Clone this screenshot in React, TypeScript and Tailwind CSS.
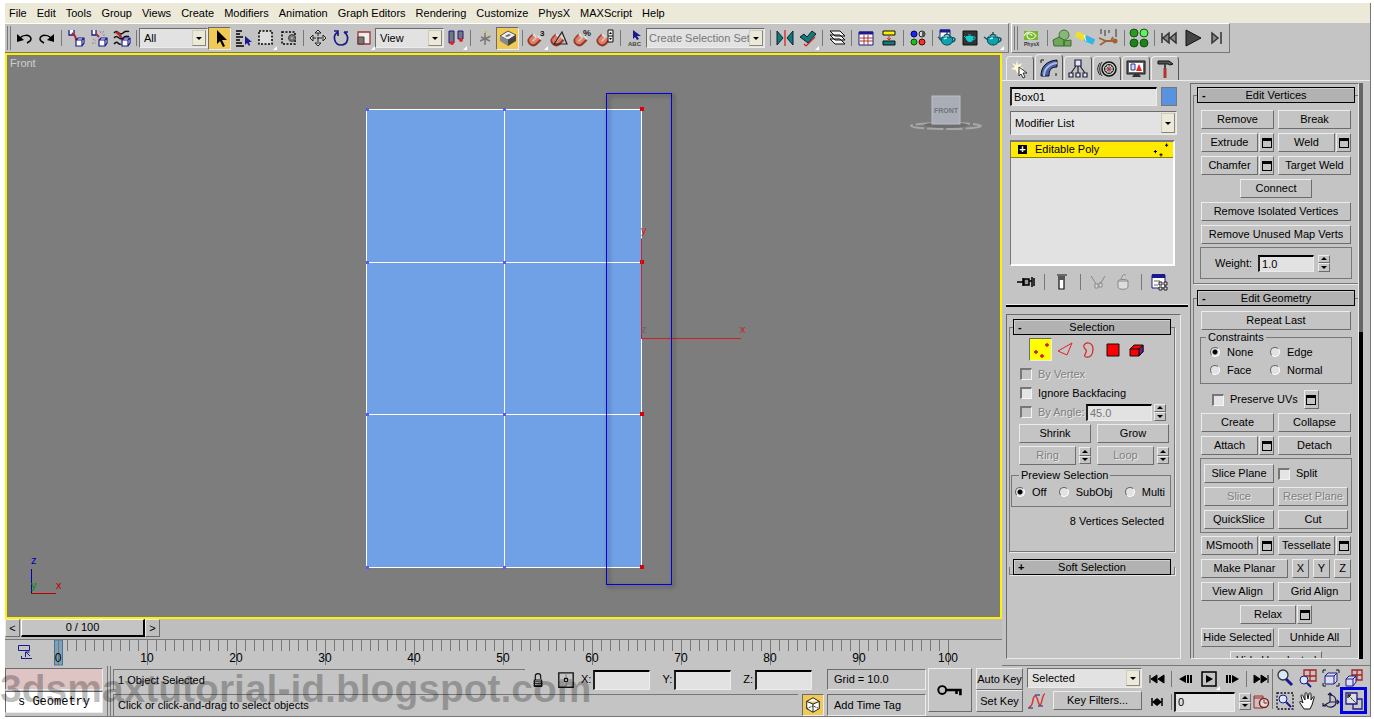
import type { ReactNode } from "react";
import clsx from "clsx";

const menus = [
  "File", "Edit", "Tools", "Group", "Views", "Create", "Modifiers", "Animation",
  "Graph Editors", "Rendering", "Customize", "PhysX", "MAXScript", "Help",
];

const raised = "border border-t-[#ececec] border-l-[#ececec] border-r-[#6c6c6c] border-b-[#6c6c6c]";
const sunken = "border border-t-[#6c6c6c] border-l-[#6c6c6c] border-r-[#ececec] border-b-[#ececec]";
const field = "border-t-2 border-l-2 border-r border-b border-t-black border-l-[#222] border-r-[#ececec] border-b-[#ececec] bg-[#e2e2e2]";

/* ---------- small building blocks ---------- */

function Icon({ children, size = 20 }: { children: ReactNode; size?: number }) {
  return (
    <svg width={size} height={size} viewBox="0 0 20 20" fill="none" className="shrink-0">
      {children}
    </svg>
  );
}

function Tool({ label, active, flyout, wide, children }: {
  label: string;
  active?: boolean;
  flyout?: boolean;
  wide?: boolean;
  children: ReactNode;
}) {
  return (
    <button
      aria-label={label}
      className={clsx(
        "relative flex h-[23px] shrink-0 items-center justify-center",
        wide ? "w-6" : "w-[23px]",
        active && "bg-[#f1c955]",
        active && sunken
      )}
    >
      <Icon>{children}</Icon>
      {flyout && (
        <span className="absolute right-0 bottom-0 border-4 border-t-0 border-r-0 border-transparent border-b-white" />
      )}
    </button>
  );
}

function Sep() {
  return (
    <div className="flex w-1.5 shrink-0 justify-center">
      <div className="h-4 w-px bg-[#777]" />
    </div>
  );
}

function Grip() {
  return (
    <div className="flex w-[7px] shrink-0 gap-0.5 pl-0.5">
      <div className="h-6 w-px bg-[#777]" />
      <div className="h-6 w-px bg-[#777]" />
    </div>
  );
}

function Combo({ label, value, className, muted }: {
  label: string;
  value: string;
  className: string;
  muted?: boolean;
}) {
  return (
    <div className={clsx("relative shrink-0 bg-[#e2e2e2]", sunken, className)}>
      <select
        aria-label={label}
        className={clsx(
          "h-full w-full appearance-none overflow-hidden outline-none",
          muted ? "pr-3.5 pl-0.5 text-[#777]" : "pr-4 pl-1"
        )}
      >
        <option>{value}</option>
      </select>
      <span className="pointer-events-none absolute inset-y-px right-px flex w-3.5 items-center justify-center border border-[#d0ccba] border-r-[#8a8778] border-b-[#8a8778] bg-[#ece9d8]">
        <span className="border-x-[3px] border-t-[3px] border-x-transparent border-t-black" />
      </span>
    </div>
  );
}

function Btn({ children, disabled, className }: {
  children: ReactNode;
  disabled?: boolean;
  className?: string;
}) {
  return (
    <button
      disabled={disabled}
      className={clsx(
        "flex h-[19px] min-w-0 items-center justify-center whitespace-nowrap",
        raised,
        disabled && "text-[#808080] [text-shadow:1px_1px_#ececec]",
        className
      )}
    >
      {children}
    </button>
  );
}

function SettingsBtn() {
  return (
    <button aria-label="Settings" className={clsx("flex h-[19px] w-[15px] shrink-0 items-center justify-center", raised)}>
      <span className="h-2.5 w-2.5 border border-t-[3px] border-black" />
    </button>
  );
}

function WithSettings({ children }: { children: ReactNode }) {
  return (
    <div className="flex min-w-0 gap-px">
      <Btn className="flex-1">{children}</Btn>
      <SettingsBtn />
    </div>
  );
}

function Spinner() {
  return (
    <span className="flex h-[17px] w-3 shrink-0 flex-col">
      <button aria-label="Increase" className={clsx("flex flex-1 items-center justify-center", raised)}>
        <span className="border-x-[3px] border-b-[3px] border-x-transparent border-b-black" />
      </button>
      <button aria-label="Decrease" className={clsx("flex flex-1 items-center justify-center", raised)}>
        <span className="border-x-[3px] border-t-[3px] border-x-transparent border-t-black" />
      </button>
    </span>
  );
}

function Check({ label, disabled }: { label: string; disabled?: boolean }) {
  return (
    <label className={clsx("flex h-4 items-center gap-1.5 whitespace-nowrap", disabled && "text-[#808080] [text-shadow:1px_1px_#ececec]")}>
      <input
        type="checkbox"
        disabled={disabled}
        className={clsx(
          "h-3 w-3 appearance-none border-t-2 border-l-2 border-r border-b border-t-[#777] border-l-[#777] border-r-[#f4f4f4] border-b-[#f4f4f4]",
          disabled ? "bg-[#c4c4c4]" : "bg-[#e4e4e4]"
        )}
      />
      {label}
    </label>
  );
}

function Radio({ label, name, checked }: { label: string; name: string; checked?: boolean }) {
  return (
    <label className="flex h-4 items-center gap-[7px] whitespace-nowrap">
      <input
        type="radio"
        name={name}
        defaultChecked={checked}
        className="h-2.5 w-2.5 appearance-none rounded-full border border-t-[#666] border-l-[#666] border-r-white border-b-white bg-[#e2e2e2] checked:bg-[radial-gradient(circle,#000_2px,#e2e2e2_3px)]"
      />
      {label}
    </label>
  );
}

function Rollout({ title, children }: { title: string; children?: ReactNode }) {
  return (
    <section className="w-[166px]">
      <button className="relative mx-1 flex h-4 w-[158px] items-center justify-center border border-black bg-[#b2b2b2] shadow-[inset_1px_1px_#cfcfcf]">
        <span className="absolute left-1 font-bold">{children ? "-" : "+"}</span>
        {title}
      </button>
      <div className={clsx("-mt-2 border border-[#777] shadow-[1px_1px_#e8e8e8]", !children && "h-2 border-t-0")}>{children}</div>
    </section>
  );
}

/* ---------- toolbar ---------- */

const magnet = (
  <g>
    <path d="M3 11c-2 4 3 7 6 4l4-4M3 11l4-4" stroke="#8d3c2c" strokeWidth="4" />
    <path d="M4 11c-2 3 2 5 4 3l4-4M4 11l3-3" stroke="#ef7a62" strokeWidth="2.5" />
    <path d="M6 6l3 3M11 8l3 3" stroke="#ddd" strokeWidth="2" />
  </g>
);

const teapot = (
  <g>
    <path d="M5 9h10c2 5-1 8-5 8s-7-3-5-8z" fill="#0aa5ac" stroke="#063c50" />
    <path d="M5 12L1 9M15 10c4-1 4 3 0 4M7 8c1-2 5-2 6 0M10 6V4" stroke="#075a6e" strokeWidth="1.5" />
    <path d="M7 11c1-1 2-1 3-1" stroke="#9ff" strokeWidth="1.5" />
  </g>
);

const cube = (
  <path d="M10 12l2-2h6v5l-2 3h-6zM10 12h6v6M16 12l2-2" fill="#fff" stroke="#1a1a8c" strokeWidth="1.2" />
);

function MainToolbar() {
  return (
    <div className="flex h-[30px] items-center border-t border-t-white border-r border-r-[#777] border-b border-b-[#777] pr-1">
      <Grip />
      <Tool label="Undo"><path d="M5 12c2-6 12-6 12-1 0 2-2 3-4 4" stroke="#000" strokeWidth="1.5" /><path d="M3 6v8l7-2z" fill="#000" /></Tool>
      <Tool label="Redo"><path d="M15 12C13 6 3 6 3 11c0 2 2 3 4 4" stroke="#000" strokeWidth="1.5" /><path d="M17 6v8l-7-2z" fill="#000" /></Tool>
      <Sep />
      <Tool label="Select and Link"><path d="M3 2v5h5V2" stroke="#1a1a8c" strokeWidth="1.3" fill="#fff" /><path d="M6 5l3 3 1 3 3 2" stroke="#b02828" strokeWidth="2" />{cube}</Tool>
      <Tool label="Unlink Selection"><path d="M3 2v5h4V2" stroke="#1a1a8c" strokeWidth="1.3" fill="#fff" /><path d="M7 6l3 3" stroke="#b02828" strokeWidth="2" /><path d="M11 3l1 3M15 3l-2 3M16 7h-3M4 11l3 2M3 15h4" stroke="#888" strokeDasharray="2 1" />{cube}</Tool>
      <Tool label="Bind to Space Warp"><path d="M2 5c4-5 5 4 9 0s4 0 6-2M2 10c4-5 5 4 9 0s4 0 6-2M2 16c4-5 4 2 7 0" stroke="#111" strokeWidth="1.5" /><path d="M4 4l4 3 1 3" stroke="#b02828" strokeWidth="2.5" />{cube}</Tool>
      <Sep />
      <Combo label="Selection Filter" value="All" className="h-5 w-[69px]" />
      <Tool label="Select Object" active><path d="M7 2v14l3-3 3 6 2-1-3-6h5z" fill="#000" /></Tool>
      <Tool label="Select by Name"><path d="M3 3h6M3 6h4M3 9h7M3 12h4M3 15h6M3 18h8" stroke="#000" strokeWidth="1.3" /><path d="M12 8v9l2-2 2 3 1-1-1-3h3z" fill="#1a1a8c" /></Tool>
      <Tool label="Rectangular Selection Region" flyout><path d="M3 3h13v13H3z" fill="#ddd" stroke="#000" strokeWidth="1.5" strokeDasharray="2 1.5" /></Tool>
      <Tool label="Window Crossing"><path d="M3 4h13v12H3z" stroke="#000" strokeWidth="1.5" strokeDasharray="2 1.5" /><circle cx="13" cy="10" r="3.5" fill="#777" stroke="#444" /><circle cx="13" cy="10" r="1" fill="#bbb" /></Tool>
      <Sep />
      <Tool label="Select and Move"><path d="M10 3v14M3 10h14" stroke="#222" strokeDasharray="5 1" /><path d="M10 2l3 3H7zM10 18l3-3H7zM2 10l3-3v6zM18 10l-3-3v6z" fill="#ddd" stroke="#222" /></Tool>
      <Tool label="Select and Rotate"><path d="M13 4c6 4 4 13-3 13S1 7 7 4M7 8V3H3M13 4h4" stroke="#1a1a8c" strokeWidth="1.7" /></Tool>
      <Tool label="Select and Uniform Scale" flyout><path d="M4 4h12v12H4z" fill="#eee" stroke="#a03535" strokeWidth="1.3" /><path d="M4 9h6v7H4z" fill="#777" stroke="#603030" /></Tool>
      <Combo label="Reference Coordinate System" value="View" className="h-5 w-[69px]" />
      <Tool label="Use Pivot Point Center" flyout><path d="M3 3h5v12H3zM12 3h5v8h-5z" fill="#777" stroke="#1a1a8c" /><circle cx="6" cy="15" r="2" fill="#e22" /><circle cx="15" cy="12" r="2" fill="#e22" /></Tool>
      <Sep />
      <Tool label="Select and Manipulate"><path d="M10 17V4M5 13l11-5M6 9l9 4" stroke="#777" strokeWidth="1.5" /><path d="M9 4h3M15 8h2" stroke="#d4c332" strokeWidth="2" /></Tool>
      <Tool label="Keyboard Shortcut Override" active><path d="M2 8l8-5 8 4-8 5z" fill="#eee" stroke="#555" /><path d="M2 8l8 4v6l-8-5z" fill="#888" /><path d="M10 12l8-5v6l-8 5z" fill="#444" /><path d="M7 8l4-2 2 1-4 2z" fill="#666" /></Tool>
      <Sep />
      <Tool label="Snaps Toggle" flyout>{magnet}<text x="13" y="8" fontSize="8" fontWeight="bold" fill="#111">3</text></Tool>
      <Tool label="Angle Snap Toggle">{magnet}<path d="M4 16L12 4l5 12z" stroke="#222" strokeWidth="1.2" /></Tool>
      <Tool label="Percent Snap Toggle">{magnet}<text x="10" y="8" fontSize="9" fontWeight="bold" fill="#222">%</text></Tool>
      <Tool label="Spinner Snap Toggle">{magnet}<path d="M12 2h5v12h-5zM12 8h5" stroke="#111" fill="#eee" /><path d="M13 6l1.500-2L16 6zM13 10l1.500 2L16 10z" fill="#000" /></Tool>
      <Sep />
      <Tool label="Edit Named Selection Sets"><path d="M8 2v9l2-2 2 3 2-1-2-3h4z" fill="#1a1a8c" /><text x="3" y="18" fontSize="6" fontWeight="bold" fill="#444">ABC</text></Tool>
      <Combo label="Named Selection Sets" value="Create Selection Set" className="h-5 w-[119px]" muted />
      <div className="w-0.5" />
      <Sep />
      <Tool label="Mirror"><path d="M2 3l6 7-6 7zM18 3l-6 7 6 7z" fill="#0e7b78" stroke="#123" /><path d="M10 2v16" stroke="#d22" strokeWidth="1.3" /></Tool>
      <Tool label="Align" flyout><path d="M2 9l4-3 3 3 5-6 4 3-8 9z" fill="#0e7b78" stroke="#123" /><path d="M8 18l9-9M6 16l2 2" stroke="#d22" strokeWidth="1.3" /></Tool>
      <Sep />
      <Tool label="Layer Manager"><g stroke="#111" fill="#f4f4f4"><path d="M3 11h10l5 5H8zM3 7h10l5 5H8zM3 3h10l5 5H8z" /></g></Tool>
      <Sep />
      <Tool label="Curve Editor"><path d="M3 4h14v13H3z" fill="#fff" stroke="#1a1a8c" /><path d="M3 5h14" stroke="#1a1a8c" strokeWidth="3" /><path d="M8 7v10M12 7v10M4 10h13M4 13h13" stroke="#a33" /></Tool>
      <Tool label="Schematic View"><path d="M4 3h12v4H4z" fill="#fff200" stroke="#111" /><path d="M4 13h12v4H4z" fill="#0e7b78" stroke="#111" /><path d="M10 8v4M8 10l2 2 2-2" stroke="#d22" /></Tool>
      <Sep />
      <Tool label="Material Editor"><circle cx="6" cy="6" r="3" fill="#22e" stroke="#006" /><circle cx="14" cy="6" r="3" fill="#ddd" stroke="#222" /><path d="M14 3a3 3 0 0 1 0 6z" fill="#555" /><circle cx="6" cy="14" r="3" fill="#2b2" stroke="#050" /><circle cx="14" cy="14" r="3" fill="#e33" stroke="#500" /></Tool>
      <Sep />
      <Tool label="Render Setup"><path d="M3 2h10v10H3z" fill="#fff" stroke="#1a1a8c" /><path d="M3 3h10" stroke="#1a1a8c" strokeWidth="3" />{teapot}</Tool>
      <Tool label="Rendered Frame Window"><path d="M3 3h14v14H3z" fill="#333" stroke="#111" /><path d="M6 8h7c1 4-1 6-3 6s-5-2-4-6z" fill="#1cc" /><path d="M13 9c3-1 3 2 0 3M6 10L4 8M8 7h3" stroke="#1cc" /></Tool>
      <Tool label="Quick Render" flyout>{teapot}</Tool>
    </div>
  );
}

function PhysxToolbar() {
  return (
    <div className="ml-0.5 flex h-[30px] w-[219px] items-center border border-t-white border-l-white border-r-[#777] border-b-[#777]">
      <Grip />
      <Tool label="PhysX"><path d="M3 3h14v9H3z" fill="#76b82a" /><path d="M3 8c3-6 10-4 12 0-3 4-8 4-9 0s5-2 5 0" stroke="#e4f2cf" strokeWidth="1.2" /><text x="3" y="18" fontSize="5" fontWeight="bold" fill="#333">PhysX</text></Tool>
      <div className="w-0.5" />
      <Sep />
      <Tool label="Rigid Body"><circle cx="12" cy="7" r="5" fill="#86b978" stroke="#47713b" /><path d="M1 12l6-3 5 3v6H2zM12 13l7-1v6h-7z" fill="#6da858" stroke="#3d6d2f" /></Tool>
      <Tool label="Constraint"><path d="M1 6l9 4" stroke="#efdf25" strokeWidth="6" /><path d="M10 10l9 4" stroke="#30b7e8" strokeWidth="6" /><path d="M9 7l2 6" stroke="#fff" /></Tool>
      <Tool label="Ragdoll"><path d="M3 1v5M7 2v6M11 2v3M18 1v8" stroke="#333" /><path d="M1 10l7 3h8M8 13l-6 4M15 9l-2 4" stroke="#a26238" strokeWidth="1.8" /><circle cx="17" cy="13" r="2.500" fill="#a26238" /></Tool>
      <div className="w-0.5" />
      <Sep />
      <Tool label="Bake" wide><g stroke="#125512"><circle cx="5" cy="5" r="4" fill="#2a9a24" /><circle cx="15" cy="5" r="4" fill="#63ef62" /><circle cx="5" cy="15" r="4" fill="#1e831c" /><circle cx="15" cy="15" r="4" fill="#1e831c" /></g></Tool>
      <Sep />
      <Tool label="Reset Simulation" wide><path d="M3 5v10M10 5l-6 5 6 5zM17 5l-6 5 6 5z" fill="#888" stroke="#333" strokeWidth="1.500" /></Tool>
      <Tool label="Play Simulation" wide><path d="M3 2l15 8-15 8z" fill="#444" stroke="#111" /></Tool>
      <Tool label="Step Simulation"><path d="M5 5l6 5-6 5zM14 4v12" fill="#888" stroke="#333" strokeWidth="1.500" /></Tool>
    </div>
  );
}

/* ---------- viewport ---------- */

const rows = [109, 262, 414, 567];

function Viewport() {
  return (
    <div className="min-h-0 flex-1 border-2 border-[#fff200] bg-[#7d7d7d]">
      <svg viewBox="7 55 993 562" className="h-full w-full text-[11px]">
        <defs>
          <filter id="soft" x="-30%" y="-10%" width="160%" height="120%">
            <feDropShadow dx="2" dy="2" stdDeviation="2" floodColor="#000" floodOpacity="0.6" />
          </filter>
        </defs>
        <text x="10" y="67" fill="#cfcfcf">Front</text>

        <rect x="366" y="109" width="276" height="459" fill="#70a0e6" />
        <g stroke="#fff" shapeRendering="crispEdges">
          <path d="M366.500 109v459M504.500 109v459M641.500 109v129M641.500 338v230" />
          {rows.map((y) => (
            <path key={y} d={`M366 ${y + 0.5}H642`} />
          ))}
        </g>
        {rows.map((y) => (
          <g key={y} shapeRendering="crispEdges">
            <rect x="366" y={y - 1} width="3" height="3" fill="#5a5af0" />
            <rect x="503" y={y - 1} width="3" height="3" fill="#5a5af0" />
            <rect x="640" y={y - 2} width="4" height="4" fill="#d00" />
          </g>
        ))}

        {/* transform gizmo */}
        <path d="M641.500 239V338.500H741" stroke="#d02020" fill="none" shapeRendering="crispEdges" />
        <text x="641" y="234" fill="#d02020">y</text>
        <text x="740" y="333" fill="#d02020">x</text>
        <text x="641" y="333" fill="#666">z</text>

        <rect x="606.500" y="93.500" width="65" height="491" fill="none" stroke="#0000e0" filter="url(#soft)" />

        {/* view cube */}
        <ellipse cx="946" cy="126" rx="35" ry="3" fill="none" stroke="#a4a7ac" strokeWidth="2" strokeDasharray="16 3" />
        <ellipse cx="946" cy="125" rx="22" ry="3" fill="#6e6e6e" />
        <rect x="932" y="96" width="28" height="28" fill="#a9adb5" stroke="#bbbfc6" />
        <text x="946" y="113" textAnchor="middle" fontSize="7" fontWeight="bold" fill="#71757d">FRONT</text>

        {/* world axis */}
        <path d="M31.500 569v25" stroke="#0000b4" />
        <path d="M31 593.500h25" stroke="#c00000" />
        <text x="31" y="564" fill="#0000b4">z</text>
        <text x="31" y="589" fill="#009000">y</text>
        <text x="56" y="589" fill="#c00000">x</text>
      </svg>
    </div>
  );
}

function TimeSlider() {
  return (
    <div className="flex h-5 items-start bg-[#bebebe]">
      <button className={clsx("flex h-[18px] w-[15px] items-center justify-center", raised)}>&lt;</button>
      <button className="ml-px flex h-[18px] w-[124px] items-center justify-center border-t border-r-2 border-b-2 border-l border-t-white border-r-black border-b-black border-l-white bg-[#c4c4c4]">
        0 / 100
      </button>
      <button className={clsx("flex h-[18px] w-[15px] items-center justify-center", raised)}>&gt;</button>
    </div>
  );
}

const frames = Array.from({ length: 101 }, (_, i) => i);

function TrackBar() {
  return (
    <div className="h-[27px] border-t border-[#777]">
      <svg viewBox="5 640 997 26" className="h-full w-full text-[12px]">
        <path d="M18.500 645.500h11v5h-11zM21 658.500h11M21.500 656v2M25.500 657v-5h4M26 652l4 4" stroke="#1a1a8c" fill="none" />
        <rect x="54.500" y="640" width="8" height="25" fill="#7ba2bd" stroke="#4d7488" />
        {frames.map((f) => {
          const x = Math.round(58 + f * 8.9) + 0.5;
          return <path key={f} d={`M${x} 640v${f % 10 ? 11 : 25}`} stroke="#777" />;
        })}
        {frames.filter((f) => f % 10 === 0).map((f) => (
          <text key={f} x={58 + f * 8.9} y="662" textAnchor="middle">{f}</text>
        ))}
      </svg>
    </div>
  );
}

/* ---------- command panel ---------- */

const tabs = [
  { name: "Create", art: <><path d="M7 1l1 5 4-2-2 4 4 1-5 2-2 4-1-4-5-1 4-2-3-4 4 2z" fill="#fffbd8" /><path d="M9 8v9l2-2 2 4 2-1-2-4h4z" fill="#fff" stroke="#333" /></> },
  { name: "Modify", art: <><path d="M2 18C2 9 7 3 18 2v7c-6 0-8 3-8 9z" fill="#4b62a8" stroke="#111" /><path d="M5 18C5 11 10 6 18 5" stroke="#a9bbe8" strokeWidth="2" /><path d="M2 2h3M2 2v3M17 18v-3" stroke="#111" /></> },
  { name: "Hierarchy", art: <path d="M7 1h6v6H7zM1 14h4v4H1zM8 14h4v4H8zM15 14h4v4h-4zM10 7v7M8 7l-5 7M12 7l5 7" fill="#dfe4ff" stroke="#223" strokeWidth="1.200" /> },
  { name: "Motion", art: <><circle cx="12" cy="10" r="7" fill="#ccc" stroke="#111" strokeWidth="1.500" /><circle cx="12" cy="10" r="4.500" stroke="#111" /><path d="M9 7l6 6M15 7l-6 6M12 6v8M8 10h8" stroke="#444" strokeWidth="0.700" /><circle cx="12" cy="10" r="1.500" fill="#d22" /><path d="M3 4c-3 4-3 8 0 12M5 3c-3 4-3 10 0 14" stroke="#222" /></> },
  { name: "Display", art: <><path d="M1 2h18v13H1z" fill="#666" stroke="#111" /><path d="M3 4h14v9H3z" fill="#fff" /><path d="M5 5h4v6H5z" stroke="#2038a0" fill="#dde" /><path d="M10 12l3-7 3 7z" fill="#e22" /><path d="M8 15h5l2 3H6z" fill="#333" /></> },
  { name: "Utilities", art: <><path d="M3 2h11l4 3-3 1-2-1H9L3 5z" fill="#555" stroke="#111" /><path d="M10 5v6" stroke="#444" strokeWidth="2" /><path d="M10 9v10" stroke="#b0352b" strokeWidth="3" /></> },
];

function CommandTabs() {
  return (
    <div role="tablist" className="flex h-7 items-end gap-px border-b border-[#ececec] pl-1">
      {tabs.map(({ name, art }) => (
        <button
          key={name}
          role="tab"
          aria-label={name}
          aria-selected={name === "Modify"}
          className={clsx(
            "flex w-7 items-center justify-center rounded-t-sm border border-b-0 border-t-[#ececec] border-l-[#ececec] border-r-[#555]",
            name === "Modify" ? "h-[26px]" : "h-6"
          )}
        >
          <Icon>{art}</Icon>
        </button>
      ))}
    </div>
  );
}

function ModifierStack() {
  return (
    <div className="pl-1">
      <div className="flex h-[19px] gap-1">
        <input aria-label="Object name" defaultValue="Box01" className={clsx("w-[147px] px-0.5 outline-none", field)} />
        <button aria-label="Object color" className="w-4 border border-[#777] bg-[#5a92e2]" />
      </div>
      <Combo label="Modifier List" value="Modifier List" className="mt-[5px] h-6 w-[167px]" />
      <div className="mt-[5px] h-[126px] w-[165px] border-t-2 border-r-2 border-b-2 border-l border-[#777] border-r-white border-b-white bg-[#e2e2e2]">
        <div className="flex h-4 items-center border-b border-[#8a8400] bg-[#ffea00] pr-1 pl-[7px]">
          <span className="flex h-[9px] w-[9px] items-center justify-center bg-black leading-none font-bold text-white">+</span>
          <span className="flex-1 pl-2">Editable Poly</span>
          <Icon size={16}><path d="M1 12h4M3 10v4M8 16h4M10 14v4M15 4h4M17 2v4" stroke="#000" strokeWidth="1.300" /></Icon>
        </div>
      </div>
      <div className="flex h-8 items-center gap-[5px] pl-1.5">
        <Icon><path d="M1 10h6M7 6v8M8 7h5v6H8zM13 9h3M16 5v10M18 6v8" stroke="#000" strokeWidth="1.500" fill="#999" /></Icon>
        <Sep />
        <Icon><path d="M5 3h10M7 4v13h5V4" stroke="#111" fill="#fff" strokeWidth="1.200" /><path d="M7 4h6v4H7z" fill="#555" /></Icon>
        <Sep />
        <Icon><path d="M3 4l5 8M17 4l-5 8M7 12h3v4H7zM11 11h3v4h-3z" stroke="#888" fill="#ddd" /></Icon>
        <Icon><path d="M5 9c0-2 10-2 10 0v6c0 3-10 3-10 0zM5 9h10M8 7l2-4h3" stroke="#888" fill="#ddd" /></Icon>
        <Sep />
        <Icon><path d="M3 3h13v13H3z" fill="#fff" stroke="#1a1a8c" /><path d="M3 4h13" stroke="#1a1a8c" strokeWidth="4" /><path d="M5 9h6M5 13h4" stroke="#666" /><path d="M10 10h3v3h-3zM15 10h3v3h-3zM10 15h3v3h-3zM15 15h3v3h-3z" fill="#ddd" stroke="#222" /></Icon>
      </div>
    </div>
  );
}

function SelectionRollout() {
  return (
    <Rollout title="Selection">
      <div className="pt-2.5 pr-1 pb-[22px] pl-[9px]">
        <div className="flex h-[23px] items-center gap-[3px] pl-2.5">
          <button aria-label="Vertex" className={clsx("flex h-[23px] w-[23px] items-center justify-center bg-[#ffff00]", sunken)}>
            <Icon><path d="M3 12h4M5 10v4M9 16h4M11 14v4M14 5h4M16 3v4" stroke="#d00" strokeWidth="1.300" /></Icon>
          </button>
          <button aria-label="Edge"><Icon><path d="M3 11L17 3l-5 12z" stroke="#d22" /></Icon></button>
          <button aria-label="Border"><Icon><path d="M6 5c3-4 9-2 9 4s-3 9-7 8 2-5 0-7-3-3-2-5z" stroke="#d22" strokeWidth="1.200" /></Icon></button>
          <button aria-label="Polygon" className="ml-0.5"><Icon><path d="M4 4h12v12H4z" fill="#f00" stroke="#111" /></Icon></button>
          <button aria-label="Element"><Icon><path d="M4 9l4-4h9v7l-4 4H4z" fill="#f00" stroke="#111" /><path d="M13 9l4-4v7l-4 4z" fill="#7b1490" stroke="#111" /><path d="M4 9h9v7" stroke="#111" /></Icon></button>
        </div>
        <div className="mt-[5px] flex flex-col gap-[3px] pl-px">
          <Check label="By Vertex" disabled />
          <Check label="Ignore Backfacing" />
          <div className="flex h-4 items-center justify-between pr-1">
            <Check label="By Angle:" disabled />
            <div className="flex gap-0.5">
              <input aria-label="Angle" disabled defaultValue="45.0" className={clsx("h-[17px] w-[66px] px-0.5 text-[#777]", field)} />
              <Spinner />
            </div>
          </div>
        </div>
        <div className="mt-1 grid grid-cols-[72px_72px] gap-x-1.5 gap-y-[3px]">
          <Btn>Shrink</Btn>
          <Btn>Grow</Btn>
          <div className="flex items-center gap-[3px]"><Btn disabled className="flex-1">Ring</Btn><Spinner /></div>
          <div className="flex items-center gap-[3px]"><Btn disabled className="flex-1">Loop</Btn><Spinner /></div>
        </div>
        <fieldset className="mt-[3px] -ml-2 h-[39px] w-[160px] border border-[#777] px-[3px]">
          <legend className="ml-1 px-0.5 leading-[14px]">Preview Selection</legend>
          <div className="flex justify-between pt-0.5 pr-0.5">
            <Radio name="preview" label="Off" checked />
            <Radio name="preview" label="SubObj" />
            <Radio name="preview" label="Multi" />
          </div>
        </fieldset>
        <p className="mt-1.5 pr-1.5 text-right leading-4">8 Vertices Selected</p>
      </div>
    </Rollout>
  );
}

function EditVertices() {
  return (
    <Rollout title="Edit Vertices">
      <div className="px-[7px] pt-3.5 pb-1">
        <div className="grid grid-cols-2 gap-1">
          <Btn>Remove</Btn>
          <Btn>Break</Btn>
          <WithSettings>Extrude</WithSettings>
          <WithSettings>Weld</WithSettings>
          <WithSettings>Chamfer</WithSettings>
          <Btn>Target Weld</Btn>
          <Btn className="col-span-2 w-[72px] justify-self-center">Connect</Btn>
          <Btn className="col-span-2">Remove Isolated Vertices</Btn>
          <Btn className="col-span-2">Remove Unused Map Verts</Btn>
        </div>
        <div className="-mx-px mt-[3px] flex h-8 items-center border border-[#777] pl-3.5">
          <label htmlFor="weight" className="pr-1.5">Weight:</label>
          <input id="weight" defaultValue="1.0" className={clsx("mr-1 h-[17px] w-14 px-0.5 outline-none", field)} />
          <Spinner />
        </div>
      </div>
    </Rollout>
  );
}

function EditGeometry() {
  return (
    <Rollout title="Edit Geometry">
      <div className="px-[7px] pt-3 pb-1">
        <Btn className="w-full">Repeat Last</Btn>
        <fieldset className="-mx-px h-[54px] border border-[#777] px-[9px]">
          <legend className="-ml-1 px-0.5 leading-[14px]">Constraints</legend>
          <div className="grid grid-cols-[60px_60px] gap-y-0.5">
            <Radio name="constraint" label="None" checked />
            <Radio name="constraint" label="Edge" />
            <Radio name="constraint" label="Face" />
            <Radio name="constraint" label="Normal" />
          </div>
        </fieldset>
        <div className="mt-1.5 flex items-center gap-1.5 pl-[11px]">
          <Check label="Preserve UVs" />
          <SettingsBtn />
        </div>
        <div className="mt-1 grid grid-cols-2 gap-1">
          <Btn>Create</Btn>
          <Btn>Collapse</Btn>
          <WithSettings>Attach</WithSettings>
          <Btn>Detach</Btn>
        </div>
        <div className="-mx-px mt-[3px] grid grid-cols-2 items-center gap-1 border border-[#777] px-[3px] pt-[5px] pb-[3px]">
          <Btn>Slice Plane</Btn>
          <Check label="Split" />
          <Btn disabled>Slice</Btn>
          <Btn disabled>Reset Plane</Btn>
          <Btn>QuickSlice</Btn>
          <Btn>Cut</Btn>
        </div>
        <div className="mt-[3px] grid grid-cols-2 gap-1">
          <WithSettings>MSmooth</WithSettings>
          <WithSettings>Tessellate</WithSettings>
          <div className="col-span-2 flex gap-1">
            <Btn className="flex-1">Make Planar</Btn>
            <Btn className="w-[17px]">X</Btn>
            <Btn className="w-[17px]">Y</Btn>
            <Btn className="w-[17px]">Z</Btn>
          </div>
          <Btn>View Align</Btn>
          <Btn>Grid Align</Btn>
          <div className="col-span-2 w-[72px] justify-self-center"><WithSettings>Relax</WithSettings></div>
          <Btn>Hide Selected</Btn>
          <Btn>Unhide All</Btn>
          <Btn className="col-span-2 w-[92px] justify-self-center">Hide Unselected</Btn>
        </div>
      </div>
    </Rollout>
  );
}

function CommandPanel() {
  return (
    <aside className="flex min-h-0 w-[368px] shrink-0 flex-col">
      <CommandTabs />
      <div className="flex min-h-0 flex-1 gap-0.5 border-b border-[#777] pb-1.5 pl-1">
        <div className="flex w-[182px] flex-col pt-1.5">
          <ModifierStack />
          <div className="mt-1.5 h-[3px] border-b-2 border-t border-t-[#ececec] border-b-black" />
          <div className={clsx("mt-[7px] flex min-h-0 w-[175px] flex-1 flex-col gap-[7px] overflow-hidden pt-1 pl-0.5", sunken)}>
            <SelectionRollout />
            <Rollout title="Soft Selection" />
          </div>
        </div>
        <div className="flex min-h-0 pt-0.5">
          <div className={clsx("flex w-[169px] flex-col gap-1.5 overflow-hidden pt-[3px] pl-0.5", sunken)}>
            <EditVertices />
            <EditGeometry />
          </div>
          <div className="flex w-1 flex-col bg-black">
            <div className="h-[249px] bg-[#666]" />
          </div>
        </div>
      </div>
    </aside>
  );
}

/* ---------- status bar ---------- */

function Coord({ axis }: { axis: string }) {
  return (
    <label className="flex items-center gap-0.5">
      {axis}:
      <input className={clsx("h-5 w-[57px] px-0.5 outline-none", field)} />
    </label>
  );
}

function NavButton({ label, highlighted, children }: { label: string; highlighted?: boolean; children: ReactNode }) {
  return (
    <button
      aria-label={label}
      className={clsx("flex h-[23px] w-[23px] items-center justify-center", highlighted && "outline-3 -outline-offset-1 outline-[#0000e6]")}
    >
      <Icon>{children}</Icon>
    </button>
  );
}

const lens = <path d="M11 11l6 6" stroke="#1a1a8c" strokeWidth="3" />;

function StatusBar() {
  return (
    <footer className="flex h-[51px] shrink-0 border-b border-[#777]">
      <div className="flex w-[98px] flex-col py-0.5">
        <div className={clsx("h-[22px] bg-[#dfc4c4]", sunken)} />
        <input
          aria-label="MAXScript listener"
          defaultValue="s Geometry"
          className={clsx("mt-px h-[22px] bg-white pl-3 font-['Liberation_Mono',monospace] text-[12px] outline-none", sunken)}
        />
      </div>
      <div className="mr-0.5 ml-1 w-1 border-x border-[#777]" />

      <div className="flex min-w-0 flex-1 flex-col gap-1 pt-[3px]">
        <div className="flex h-[21px] items-center">
          <div className="flex h-full min-w-0 flex-1 items-center border-t border-l border-[#777] pl-1">1 Object Selected</div>
          <div className="flex shrink-0 items-center gap-2.5 pl-1">
            <Icon size={18}><path d="M7 10V6c0-4 6-4 6 0v3M6 10h8v7H6z" stroke="#111" strokeWidth="1.300" /><path d="M5 12h10M5 14h10M5 16h10" stroke="#111" /></Icon>
            <Icon size={18}><path d="M2 2h16v16H2z" stroke="#111" strokeWidth="1.500" /><circle cx="10" cy="10" r="2" stroke="#111" strokeWidth="1.500" /><path d="M2 10h5M13 10h5M10 2v5M10 13v5" stroke="#777" /></Icon>
          </div>
          <div className="flex shrink-0 gap-3 pr-[15px] pl-1.5">
            <Coord axis="X" />
            <Coord axis="Y" />
            <Coord axis="Z" />
          </div>
        </div>
        <div className="flex h-[22px] gap-1 pr-[3px]">
          <div className="flex flex-1 items-center border-t border-l border-[#777] pl-1">Click or click-and-drag to select objects</div>
          <button aria-label="Adaptive Degradation" className={clsx("flex w-[22px] items-center justify-center bg-[#f1c955]", sunken)}>
            <Icon size={18}><path d="M3 6l7-4 7 4v8l-7 4-7-4zM3 6l7 3 7-3M10 9v9" fill="#fff" stroke="#111" /><path d="M3 14l7-3 7 3" stroke="#111" strokeDasharray="2 1" /></Icon>
          </button>
        </div>
      </div>

      <div className="flex w-[99px] shrink-0 flex-col gap-1 pt-[3px]">
        <div className={clsx("flex h-[21px] items-center pl-1.5", sunken)}>Grid = 10.0</div>
        <div className={clsx("flex h-[22px] items-center pl-1.5", sunken)}>Add Time Tag</div>
      </div>

      <div className="flex shrink-0 gap-1 pt-0.5 pl-0.5">
        <button aria-label="Set Keys" className={clsx("flex h-11 w-11 items-center justify-center", raised)}>
          <Icon size={26}><circle cx="4" cy="10" r="3" stroke="#000" strokeWidth="1.500" /><path d="M7 10h12M15 10v3M18 10v4" stroke="#000" strokeWidth="2" /></Icon>
        </button>
        <div className="flex w-[47px] flex-col">
          <Btn className="h-[22px]">Auto Key</Btn>
          <Btn className="h-[22px]">Set Key</Btn>
        </div>
        <div className="flex w-[115px] flex-col gap-[3px]">
          <Combo label="Key selection" value="Selected" className="h-5 w-full" />
          <div className="flex h-5 gap-0.5">
            <div className="w-6"><Icon><path d="M2 16c5 0 3-11 6-11s3 9 5 9 2-11 5-11" stroke="#d33" strokeWidth="1.500" /><path d="M1 17h5M8 4h5M11 15h5" stroke="#1a1a8c" /></Icon></div>
            <Btn className="h-5 flex-1">Key Filters...</Btn>
          </div>
        </div>
      </div>

      <div className="flex w-[129px] shrink-0 flex-col pt-px pl-[3px]">
        <div className="flex h-[23px] items-center">
          <Tool label="Go to Start"><path d="M3 6v8M10 6v8l-6-4zM17 6v8l-6-4z" fill="#000" stroke="#000" /></Tool>
          <Sep />
          <Tool label="Previous Frame"><path d="M10 6v8l-7-4z" fill="#000" /><path d="M12 6v8M15 6v8" stroke="#000" strokeWidth="2" /></Tool>
          <Tool label="Play Animation" flyout><path d="M3 3h14v14H3z" stroke="#000" strokeWidth="1.500" /><path d="M7 6l7 4-7 4z" fill="#000" /></Tool>
          <Tool label="Next Frame"><path d="M10 6v8l7-4z" fill="#000" /><path d="M5 6v8M8 6v8" stroke="#000" strokeWidth="2" /></Tool>
          <Sep />
          <Tool label="Go to End" wide><path d="M17 6v8M10 6v8l6-4zM3 6v8l6-4z" fill="#000" stroke="#000" /></Tool>
        </div>
        <div className="flex h-[23px] items-center">
          <Tool label="Key Mode"><path d="M5 6v8M15 6v8" stroke="#000" strokeWidth="1.500" /><path d="M10 6v8l-5-4zM10 6v8l5-4z" fill="#000" /></Tool>
          <Sep />
          <input aria-label="Current frame" defaultValue="0" className={clsx("mr-1 h-5 w-[61px] px-0.5 outline-none", field)} />
          <Spinner />
          <Icon><path d="M3 4h9v12H3zM3 6h9" stroke="#a22" /><circle cx="13" cy="11" r="4.500" fill="#ddd" stroke="#822" strokeWidth="1.500" /><path d="M13 8v3h3" stroke="#822" /></Icon>
        </div>
      </div>

      <div className="flex shrink-0 items-center pb-1 pl-px">
        <div className="h-10 w-px bg-[#777]" />
        <div className="grid grid-cols-4 pr-[5px]">
          <NavButton label="Zoom"><circle cx="8" cy="7" r="5" fill="#d8e8ff" stroke="#333" strokeWidth="1.300" />{lens}</NavButton>
          <NavButton label="Zoom All"><path d="M6 2h12v11H6zM12 2v11M6 8h12" stroke="#a22" strokeWidth="1.300" /><circle cx="6" cy="12" r="4" fill="#d8e8ff" stroke="#1a1a8c" /><path d="M9 15l4 4" stroke="#1a1a8c" strokeWidth="2" /></NavButton>
          <NavButton label="Zoom Extents"><path d="M4 8l3-3h9v8l-3 3H4zM4 8h9v8M13 8l3-3" fill="#dde" stroke="#1a1a8c" /><path d="M2 5V2h3M15 2h3v3M2 15v3h3M18 15v3h-3" stroke="#111" /></NavButton>
          <NavButton label="Zoom Extents All"><path d="M8 2h10v10H8zM13 2v10M8 7h10" stroke="#a22" strokeWidth="1.300" /><path d="M2 11l3-3h7v6l-3 4H2zM2 11h7v7M9 11l3-3" fill="#dde" stroke="#1a1a8c" /></NavButton>
          <NavButton label="Zoom Region"><path d="M2 2h16v16H2z" stroke="#111" strokeWidth="1.300" strokeDasharray="2 1.500" /><circle cx="8" cy="8" r="4" fill="#d8e8ff" stroke="#1a1a8c" /><path d="M11 11l5 5" stroke="#1a1a8c" strokeWidth="2" /></NavButton>
          <NavButton label="Pan"><path d="M6 18l-4-6c-1-2 1-2 3 0L3 5c0-2 2-1 2 0l2 4V3c0-2 2-2 2 0l1 5 1-5c0-2 2-1 2 0v6l2-3c1-1 2 0 1 1l-2 7-2 4z" fill="#fff" stroke="#111" /></NavButton>
          <NavButton label="Arc Rotate"><path d="M9 2v9l-7 4M9 11h9M7 4l2-2 2 2M16 9l2 2-2 2M2 12v3h3M5 14c3 4 10 2 10-3M9 4c4 0 6 3 6 7" stroke="#1a1a4c" strokeWidth="1.200" /></NavButton>
          <NavButton label="Maximize Viewport Toggle" highlighted><path d="M9 8h9v10H9z" stroke="#1a1a8c" fill="#ccc" strokeWidth="1.300" /><path d="M2 2h11v11H2z" stroke="#1a1a8c" fill="#ddd" strokeWidth="1.300" /><path d="M4 7V4h3" stroke="#111" strokeWidth="1.300" /><path d="M5 5l8 8" stroke="#111" strokeDasharray="2 1" /></NavButton>
        </div>
      </div>
    </footer>
  );
}

export default function App() {
  return (
    <div className="relative h-screen overflow-hidden bg-white pt-[3px] pr-[3px] pb-0.5 pl-[5px] font-['Liberation_Sans',Arial,sans-serif] text-[11px] text-black">
      <div className="flex h-full flex-col border-r border-[#777] bg-[#c4c4c4]">
        <nav className="flex h-5 shrink-0 items-center gap-2.5 bg-[#ece9d8] pl-1">
          {menus.map((m) => (
            <button key={m} className="whitespace-nowrap">{m}</button>
          ))}
        </nav>
        <div className="flex shrink-0">
          <MainToolbar />
          <PhysxToolbar />
        </div>
        <div className="flex min-h-0 flex-1">
          <main className="flex min-w-0 flex-1 flex-col">
            <Viewport />
            <TimeSlider />
            <TrackBar />
          </main>
          <CommandPanel />
        </div>
        <StatusBar />
      </div>

      {/* site watermark */}
      <div className="pointer-events-none absolute bottom-0 left-0 text-[39px] leading-[60px] font-bold text-black/25">
        3dsmaxtutorial-id.blogspot.com
      </div>
    </div>
  );
}
